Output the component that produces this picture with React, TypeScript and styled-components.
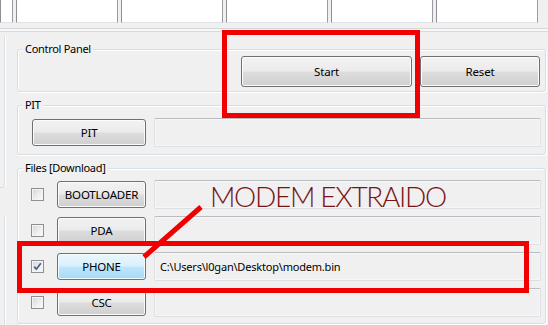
import React from "react";
import styled, { createGlobalStyle, css } from "styled-components";

const GlobalStyle = createGlobalStyle`
  html, body { margin: 0; padding: 0; background: #f0f0f0; }
  body { font-family: "Noto Sans", "DejaVu Sans", sans-serif; font-size: 11px; color: #000; }
`;

const Screen = styled.div`
  position: relative;
  width: 548px;
  height: 325px;
  overflow: hidden;
  background: #f0f0f0;
`;

const TopFields = styled.div`
  display: flex;
  gap: 3px;
  margin-top: -1px;
`;

const TopBox = styled.div<{ $w: number }>`
  box-sizing: border-box;
  flex: none;
  width: ${(p) => p.$w}px;
  height: 24px;
  background: #fff;
  border: 1px solid #8d8f94;
  border-bottom-color: #dfe3e8;
  border-right-color: #9a9ca0;
`;

const TabStrip = styled.div`
  box-sizing: border-box;
  margin-top: 5px;
  height: 4px;
  border-top: 1px solid #d7d7d7;
  border-bottom: 1px solid #dadada;
  background: #f8f8f8;
`;

const Body = styled.div`
  display: flex;
`;

const SidePane = styled.div`
  flex: none;
  width: 5px;
  display: flex;
  flex-direction: column;
`;

const SideBlock = styled.div<{ $top: number; $h: number }>`
  box-sizing: border-box;
  margin-top: ${(p) => p.$top}px;
  height: ${(p) => p.$h}px;
  border-right: 1px solid #d5dfe5;
  border-bottom: 1px solid #d5dfe5;
  border-bottom-right-radius: 3px;
  box-shadow: 1px 0 0 #fff;
`;

const Groups = styled.div`
  box-sizing: border-box;
  margin-left: 12px;
  width: 529px;
  padding-top: 17px;
  display: flex;
  flex-direction: column;
  gap: 13px;
`;

const Group = styled.div<{ $pl: number; $pr: number; $pb: number }>`
  box-sizing: border-box;
  border: 1px solid #d5dfe5;
  border-radius: 3px;
  box-shadow: inset 1px 1px 0 #fff, 1px 1px 0 #fff;
  padding: 0 ${(p) => p.$pr}px ${(p) => p.$pb}px ${(p) => p.$pl}px;
`;

const Legend = styled.div<{ $ml: number }>`
  width: fit-content;
  height: 14px;
  line-height: 14px;
  margin: -8px 0 0 ${(p) => p.$ml}px;
  padding: 0 2px;
  background: #f0f0f0;
  letter-spacing: -0.3px;
  white-space: nowrap;
`;

const ControlRow = styled.div`
  display: flex;
  justify-content: flex-end;
  gap: 8px;
`;

const FieldRow = styled.div<{ $mt: number }>`
  display: flex;
  align-items: center;
  height: 29px;
  margin-top: ${(p) => p.$mt}px;
`;

const FileRows = styled.div`
  display: flex;
  flex-direction: column;
  gap: 7px;
  margin-top: 5px;
`;

const WinButton = styled.div<{ $w: number; $h: number; $focus?: boolean }>`
  box-sizing: border-box;
  flex: none;
  width: ${(p) => p.$w}px;
  height: ${(p) => p.$h}px;
  display: flex;
  align-items: center;
  justify-content: center;
  border: 1px solid #707070;
  border-radius: 3px;
  background: linear-gradient(#f2f2f2 0%, #ebebeb 49%, #dddddd 51%, #cfcfcf 100%);
  box-shadow: inset 0 0 0 1px #fbfbfb;
  font-size: 11.5px;
  letter-spacing: -0.2px;
  ${(p) =>
    p.$focus &&
    css`
      border-color: #3c7fb1;
      background: linear-gradient(#eaf6fd 0%, #d9f0fc 49%, #bee6fd 51%, #a7d9f5 100%);
      box-shadow: inset 0 0 0 1px #f4fbff;
    `}
`;

const PathField = styled.div<{ $gap: number }>`
  box-sizing: border-box;
  flex: 1;
  height: 29px;
  margin-left: ${(p) => p.$gap}px;
  display: flex;
  align-items: center;
  padding-left: 5px;
  border: 1px solid #dcdfe3;
  border-top-color: #b9bcc1;
  border-radius: 2px;
  background: #f0f0f0;
  box-shadow: inset 0 0 0 1px #f7f7f7;
  letter-spacing: -0.2px;
  white-space: nowrap;
`;

const Check = styled.div<{ $on?: boolean }>`
  box-sizing: border-box;
  flex: none;
  width: 13px;
  height: 13px;
  margin: 0 13px 0 13px;
  border: 1px solid #8e8f8f;
  background: linear-gradient(135deg, #d3d6da 0%, #eeeff1 60%, #fbfbfb 100%);
  box-shadow: inset 0 0 0 1px #f4f4f4;
  display: flex;
  align-items: center;
  justify-content: center;
`;

const Overlay = styled.svg`
  position: absolute;
  left: 0;
  top: 0;
  pointer-events: none;
`;

const Callout = styled.span`
  position: absolute;
  left: 210px;
  top: 182px;
  font-family: "Lato", "DejaVu Sans", sans-serif;
  font-weight: 300;
  font-size: 28px;
  line-height: 28px;
  letter-spacing: -1.3px;
  color: #781416;
  white-space: nowrap;
`;

const files = [
  { name: "BOOTLOADER", on: false, path: "" },
  { name: "PDA", on: false, path: "" },
  { name: "PHONE", on: true, path: "C:\\Users\\l0gan\\Desktop\\modem.bin" },
  { name: "CSC", on: false, path: "" },
];

export default function App() {
  return (
    <Screen>
      <GlobalStyle />
      <TopFields>
        {[13, 102, 102, 102, 102, 102].map((w, i) => (
          <TopBox key={i} $w={w} />
        ))}
      </TopFields>
      <TabStrip />
      <Body>
        <SidePane>
          <SideBlock $top={4} $h={152} />
          <SideBlock $top={27} $h={200} />
        </SidePane>
        <Groups>
          <Group $pl={0} $pr={5} $pb={4}>
            <Legend $ml={5}>Control Panel</Legend>
            <ControlRow>
              <WinButton $w={171} $h={31}>Start</WinButton>
              <WinButton $w={120} $h={31}>Reset</WinButton>
            </ControlRow>
          </Group>
          <Group $pl={14} $pr={4} $pb={7}>
            <Legend $ml={-9}>PIT</Legend>
            <FieldRow $mt={6}>
              <WinButton $w={114} $h={27}>PIT</WinButton>
              <PathField $gap={8} />
            </FieldRow>
          </Group>
          <Group $pl={0} $pr={4} $pb={6}>
            <Legend $ml={5}>Files [Download]</Legend>
            <FileRows>
              {files.map((f) => (
                <FieldRow key={f.name} $mt={0}>
                  <Check $on={f.on}>
                    {f.on && (
                      <svg width="9" height="9" viewBox="0 0 9 9">
                        <path d="M1.2 4.6 L3.4 7.2 L7.8 1.2" fill="none" stroke="#4a5e8f" strokeWidth="1.7" />
                      </svg>
                    )}
                  </Check>
                  <WinButton $w={89} $h={27} $focus={f.on}>{f.name}</WinButton>
                  <PathField $gap={8}>{f.path}</PathField>
                </FieldRow>
              ))}
            </FileRows>
          </Group>
        </Groups>
      </Body>
      <Overlay width="548" height="325" viewBox="0 0 548 325">
        <rect x="224.5" y="32.5" width="193" height="83" fill="none" stroke="#f00000" strokeWidth="5" />
        <rect x="19.5" y="243.5" width="507" height="47" fill="none" stroke="#f00000" strokeWidth="5" />
        <line x1="144" y1="257" x2="201" y2="207" stroke="#f00000" strokeWidth="5" />
      </Overlay>
      <Callout>MODEM EXTRAIDO</Callout>
    </Screen>
  );
}
